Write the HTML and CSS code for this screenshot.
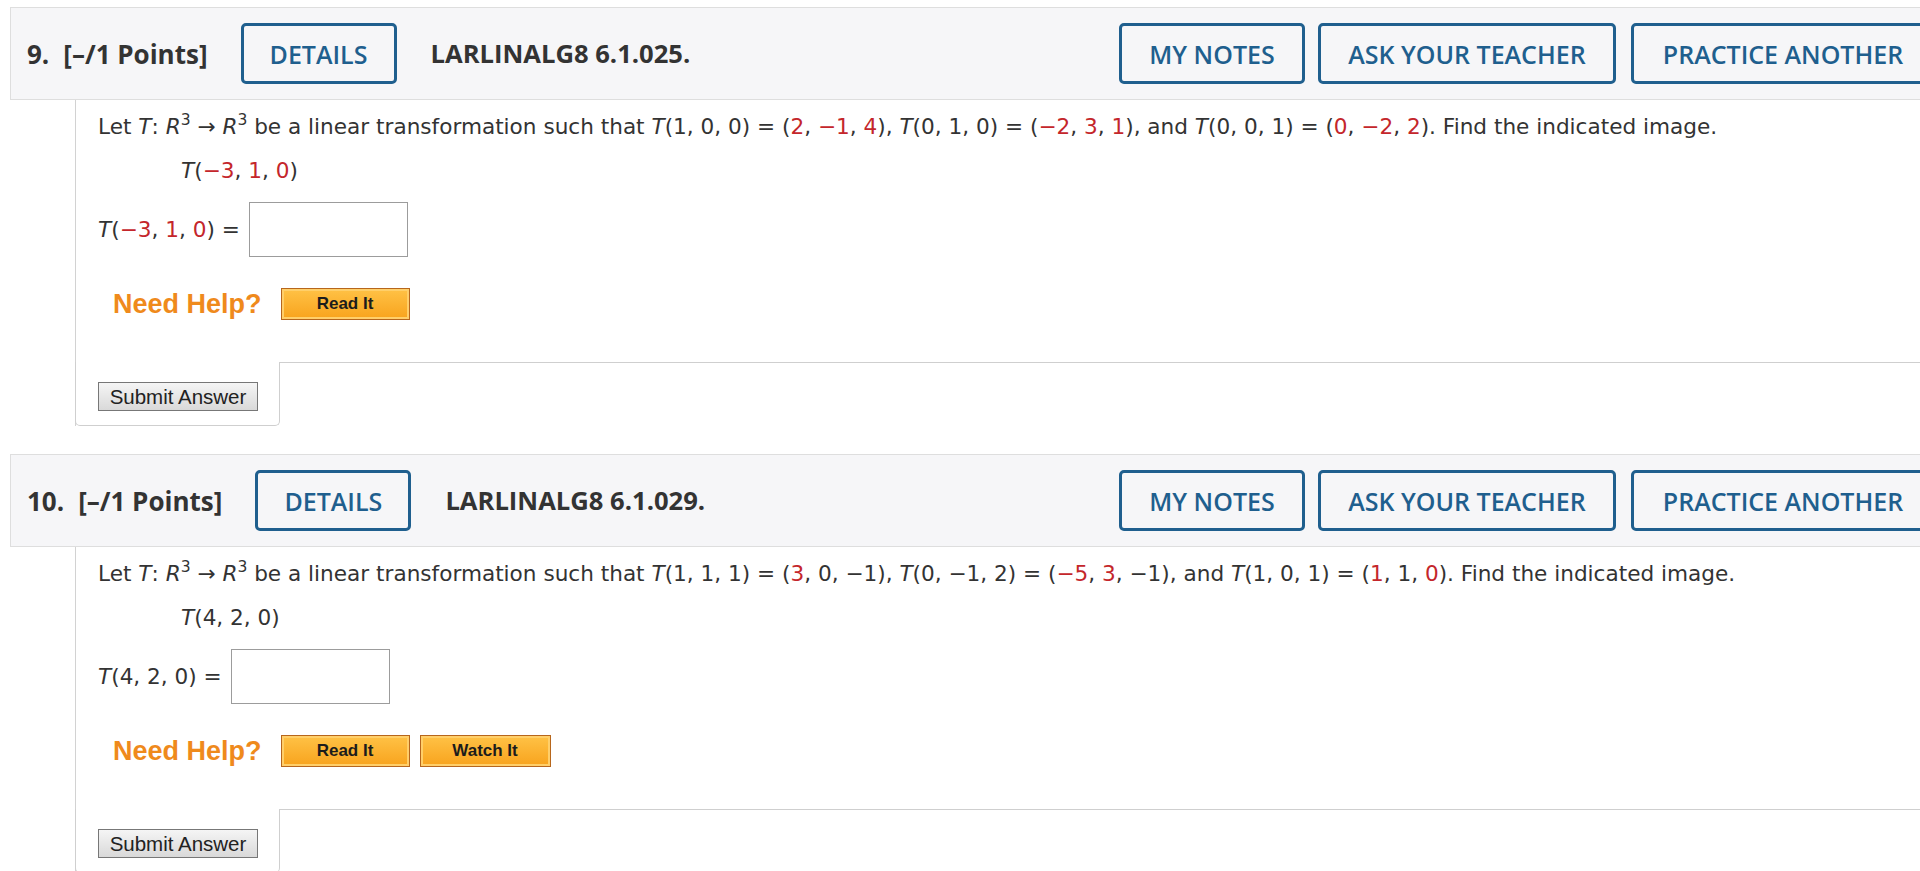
FILE: index.html
```html
<!DOCTYPE html>
<html lang="en">
<head>
<meta charset="utf-8">
<title>Questions</title>
<link rel="stylesheet" href="styles.css">
</head>
<body>
<div class="page">
  <section class="question">
    <header class="q-header">
      <span class="q-num">9.</span><span class="q-points">[–/1 Points]</span>
      <button class="hbtn details">DETAILS</button>
      <span class="q-code">LARLINALG8 6.1.025.</span>
      <div class="hright">
        <button class="hbtn notes">MY NOTES</button>
        <button class="hbtn ask">ASK YOUR TEACHER</button>
        <button class="hbtn practice">PRACTICE ANOTHER</button>
      </div>
    </header>
    <div class="q-body">
      <p class="q-text">Let <i>T</i>: <i>R</i><sup>3</sup> → <i>R</i><sup>3</sup> be a linear transformation such that <i>T</i>(1, 0, 0) = (<span class="r">2</span>, <span class="r">−1</span>, <span class="r">4</span>), <i>T</i>(0, 1, 0) = (<span class="r">−2</span>, <span class="r">3</span>, <span class="r">1</span>), and <i>T</i>(0, 0, 1) = (<span class="r">0</span>, <span class="r">−2</span>, <span class="r">2</span>). Find the indicated image.</p>
      <p class="q-indent"><i>T</i>(<span class="r">−3</span>, <span class="r">1</span>, <span class="r">0</span>)</p>
      <div class="answer-row">
        <span class="q-label"><i>T</i>(<span class="r">−3</span>, <span class="r">1</span>, <span class="r">0</span>) =</span>
        <input class="ans" type="text">
      </div>
      <div class="help-row">
        <span class="need-help">Need Help?</span>
        <button class="help-btn">Read It</button>
      </div>
      <div class="q-footer">
        <div class="submit-cell"><button class="submit">Submit Answer</button></div>
        <div class="history-cell"></div>
      </div>
    </div>
  </section>

  <section class="question">
    <header class="q-header">
      <span class="q-num">10.</span><span class="q-points">[–/1 Points]</span>
      <button class="hbtn details">DETAILS</button>
      <span class="q-code">LARLINALG8 6.1.029.</span>
      <div class="hright">
        <button class="hbtn notes">MY NOTES</button>
        <button class="hbtn ask">ASK YOUR TEACHER</button>
        <button class="hbtn practice">PRACTICE ANOTHER</button>
      </div>
    </header>
    <div class="q-body">
      <p class="q-text">Let <i>T</i>: <i>R</i><sup>3</sup> → <i>R</i><sup>3</sup> be a linear transformation such that <i>T</i>(1, 1, 1) = (<span class="r">3</span>, 0, −1), <i>T</i>(0, −1, 2) = (<span class="r">−5</span>, <span class="r">3</span>, −1), and <i>T</i>(1, 0, 1) = (<span class="r">1</span>, 1, <span class="r">0</span>). Find the indicated image.</p>
      <p class="q-indent"><i>T</i>(4, 2, 0)</p>
      <div class="answer-row">
        <span class="q-label"><i>T</i>(4, 2, 0) =</span>
        <input class="ans" type="text">
      </div>
      <div class="help-row">
        <span class="need-help">Need Help?</span>
        <button class="help-btn">Read It</button>
        <button class="help-btn watch">Watch It</button>
      </div>
      <div class="q-footer">
        <div class="submit-cell"><button class="submit">Submit Answer</button></div>
        <div class="history-cell"></div>
      </div>
    </div>
  </section>
</div>
</body>
</html>
```

FILE: styles.css
```css
html, body {
  margin: 0;
  padding: 0;
  background: #ffffff;
  overflow: hidden;
}

.page {
  width: 1960px;
  padding-top: 7px;
}

.question {
  margin-left: 10px;
}

.question + .question {
  margin-top: 28px;
}

/* ---------- header bar ---------- */
.q-header {
  display: flex;
  align-items: center;
  height: 93px;
  box-sizing: border-box;
  background: #f6f6f8;
  border: 1px solid #dedede;
  border-right: none;
  padding: 0 25px 0 16px;
  font-family: "Open Sans", "Liberation Sans", sans-serif;
}

.q-num,
.q-points,
.q-code {
  font-size: 26px;
  font-weight: 700;
  color: #333333;
  white-space: nowrap;
}

.q-points {
  margin-left: 14px;
}

.q-code {
  font-size: 25.6px;
  margin-left: 34px;
}

.hbtn {
  height: 61px;
  box-sizing: border-box;
  border: 3px solid #1f5f8e;
  border-radius: 5px;
  background: transparent;
  color: #1f5f8e;
  font-family: "Open Sans", "Liberation Sans", sans-serif;
  font-size: 25px;
  font-weight: 600;
  padding: 0;
  text-align: center;
  white-space: nowrap;
  flex-shrink: 0;
}

.details {
  width: 156px;
  margin-left: 33px;
}

.hright {
  display: flex;
  margin-left: auto;
  gap: 13px;
}

.notes { width: 186px; }
.ask { width: 298px; }
.practice { width: 304px; margin-left: 2px; }

/* ---------- body ---------- */
.q-body {
  margin-left: 65px;
  border-left: 1px solid #d2d2d2;
  font-family: "DejaVu Sans", Verdana, sans-serif;
  font-size: 21.6px;
  color: #333333;
}

.q-text {
  margin: 0;
  padding: 13px 0 0 22px;
  line-height: 28px;
  white-space: nowrap;
}

.q-indent {
  margin: 16px 0 0 0;
  padding-left: 105px;
  line-height: 28px;
}

sup {
  font-size: 0.72em;
  line-height: 0;
  vertical-align: 0.55em;
}

.r {
  color: #c4262b;
}

.answer-row {
  display: flex;
  align-items: center;
  gap: 9px;
  margin-top: 17px;
  padding-left: 22px;
}

.ans {
  width: 159px;
  height: 55px;
  box-sizing: border-box;
  border: 1px solid #9c9c9c;
  background: #ffffff;
  margin: 0;
  padding: 0;
}

.help-row {
  display: flex;
  align-items: center;
  margin-top: 31px;
  padding-left: 37px;
  height: 32px;
}

.need-help {
  font-family: "Liberation Sans", Arial, sans-serif;
  font-weight: 700;
  font-size: 27px;
  color: #ef8a1c;
  margin-right: 19px;
}

.help-btn {
  width: 129px;
  height: 32px;
  box-sizing: border-box;
  border: 1px solid #b7661c;
  box-shadow: inset 0 0 0 2px #ffcf6a;
  background: linear-gradient(#ffc246, #f8a31d);
  font-family: "Liberation Sans", Arial, sans-serif;
  font-weight: 700;
  font-size: 17px;
  color: #1c1c1c;
  padding: 0;
}

.watch {
  width: 131px;
  margin-left: 10px;
}

.q-footer {
  display: flex;
  margin-top: 42px;
}

.submit-cell {
  margin-left: -1px;
  border: 1px solid #cfcfcf;
  border-top: none;
  border-radius: 0 0 5px 5px;
  padding: 20px 21px 14px 22px;
}

.submit {
  width: 160px;
  height: 29px;
  box-sizing: border-box;
  border: 1px solid #777777;
  background: linear-gradient(#f5f5f5, #d9d9d9);
  font-family: "Liberation Sans", Arial, sans-serif;
  font-size: 20.5px;
  color: #222222;
  padding: 0;
}

.history-cell {
  flex: 1;
  border-top: 1px solid #cfcfcf;
}
```
